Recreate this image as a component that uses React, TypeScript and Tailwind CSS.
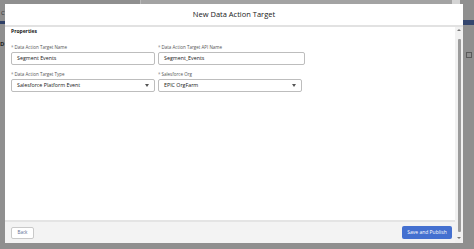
const font = { fontFamily: '"Open Sans", "Noto Sans", sans-serif' }

function Field({ label, value, select, width }: { label: string; value: string; select?: boolean; width: string }) {
  return (
    <div className={`flex flex-col ${width}`}>
      <div className="h-[8px] flex items-center text-[4.5px] leading-none text-[#555]">
        <span className="text-[#8a8a8a] mr-[1px]">*</span>
        {label}
      </div>
      <div className="mt-[1px] h-[13px] border border-[#bdbdbd] rounded-[2px] bg-white flex items-center justify-between pl-[5px] pr-[5px]">
        <span className="text-[5.3px] leading-none text-[#181818]">{value}</span>
        {select && <span className="w-0 h-0 border-l-[2.5px] border-r-[2.5px] border-t-[3px] border-l-transparent border-r-transparent border-t-[#555]" />}
      </div>
    </div>
  )
}

export default function App() {
  return (
    <div className="relative w-[474px] h-[249px] bg-[#8f8f8f] overflow-hidden" style={font}>
      {/* page behind the overlay */}
      <div className="absolute left-[140px] top-0 w-[312px] h-[4px] bg-[#a3a3a3] border-l border-[#b8b8b8]" />
      <div className="absolute left-[452px] top-0 w-[8px] h-[4px] bg-[#d4d4d4]" />
      <div className="absolute left-0 top-[21px] w-[5px] h-[3px] bg-[#2e3f66]" />
      <div className="absolute left-[1px] top-[10px] text-[6px] leading-none text-[#333]">C</div>
      <div className="absolute left-0 top-[41px] text-[6px] leading-none font-bold text-[#222]">D</div>
      <div className="absolute left-[463px] top-[20px] w-[11px] h-[5px] bg-[#34466e]" />
      <div className="absolute left-[466px] top-[52px] w-[6px] h-[6px] border border-[#5a5a5a]" />

      <div className="ml-[5px] mt-[4px] w-[458px] h-[239px] bg-white flex flex-col">
        <div className="h-[23px] shrink-0 flex items-center justify-center border-b-[2px] border-[#e2e2e2]">
          <span className="text-[7.5px] leading-none text-[#181818]">New Data Action Target</span>
        </div>
        <div className="flex-1 flex min-h-0">
          <div className="flex-1 flex flex-col">
            <div className="flex-1 pl-[6px] pt-[1px]">
              <div className="h-[8px] flex items-center text-[5px] font-bold text-[#181818]">Properties</div>
              <div className="mt-[7px] flex gap-[3px]">
                <Field label="Data Action Target Name" value="Segment Events" width="w-[144px]" />
                <Field label="Data Action Target API Name" value="Segment_Events" width="w-[147px]" />
              </div>
              <div className="mt-[5px] flex gap-[3px]">
                <Field label="Data Action Target Type" value="Salesforce Platform Event" select width="w-[144px]" />
                <Field label="Salesforce Org" value="EPIC OrgFarm" select width="w-[144px]" />
              </div>
            </div>
            <div className="h-[23px] shrink-0 bg-[#f3f3f3] border-t-[2px] border-[#e4e4e4] flex items-center justify-between pl-[6px] pr-[3px]">
              <button className="w-[23px] h-[12px] bg-white border border-[#c9c9c9] rounded-[2px] text-[4.5px] leading-none text-[#5a6b8f]">
                Back
              </button>
              <button className="w-[50px] h-[13px] bg-[#4470d0] rounded-[2px] text-[5px] leading-none text-white">
                Save and Publish
              </button>
            </div>
          </div>
          <div className="w-[8px] shrink-0 bg-[#f1f1f1] flex flex-col items-center">
            <span className="mt-[2px] w-0 h-0 border-l-[2px] border-r-[2px] border-b-[2px] border-l-transparent border-r-transparent border-b-[#777]" />
            <div className="mt-[8px] w-[3px] flex-1 bg-[#9c9c9c] rounded-[1px]" />
            <span className="mt-[5px] mb-[4px] w-0 h-0 border-l-[2px] border-r-[2px] border-t-[2px] border-l-transparent border-r-transparent border-t-[#777]" />
          </div>
        </div>
      </div>
    </div>
  )
}
